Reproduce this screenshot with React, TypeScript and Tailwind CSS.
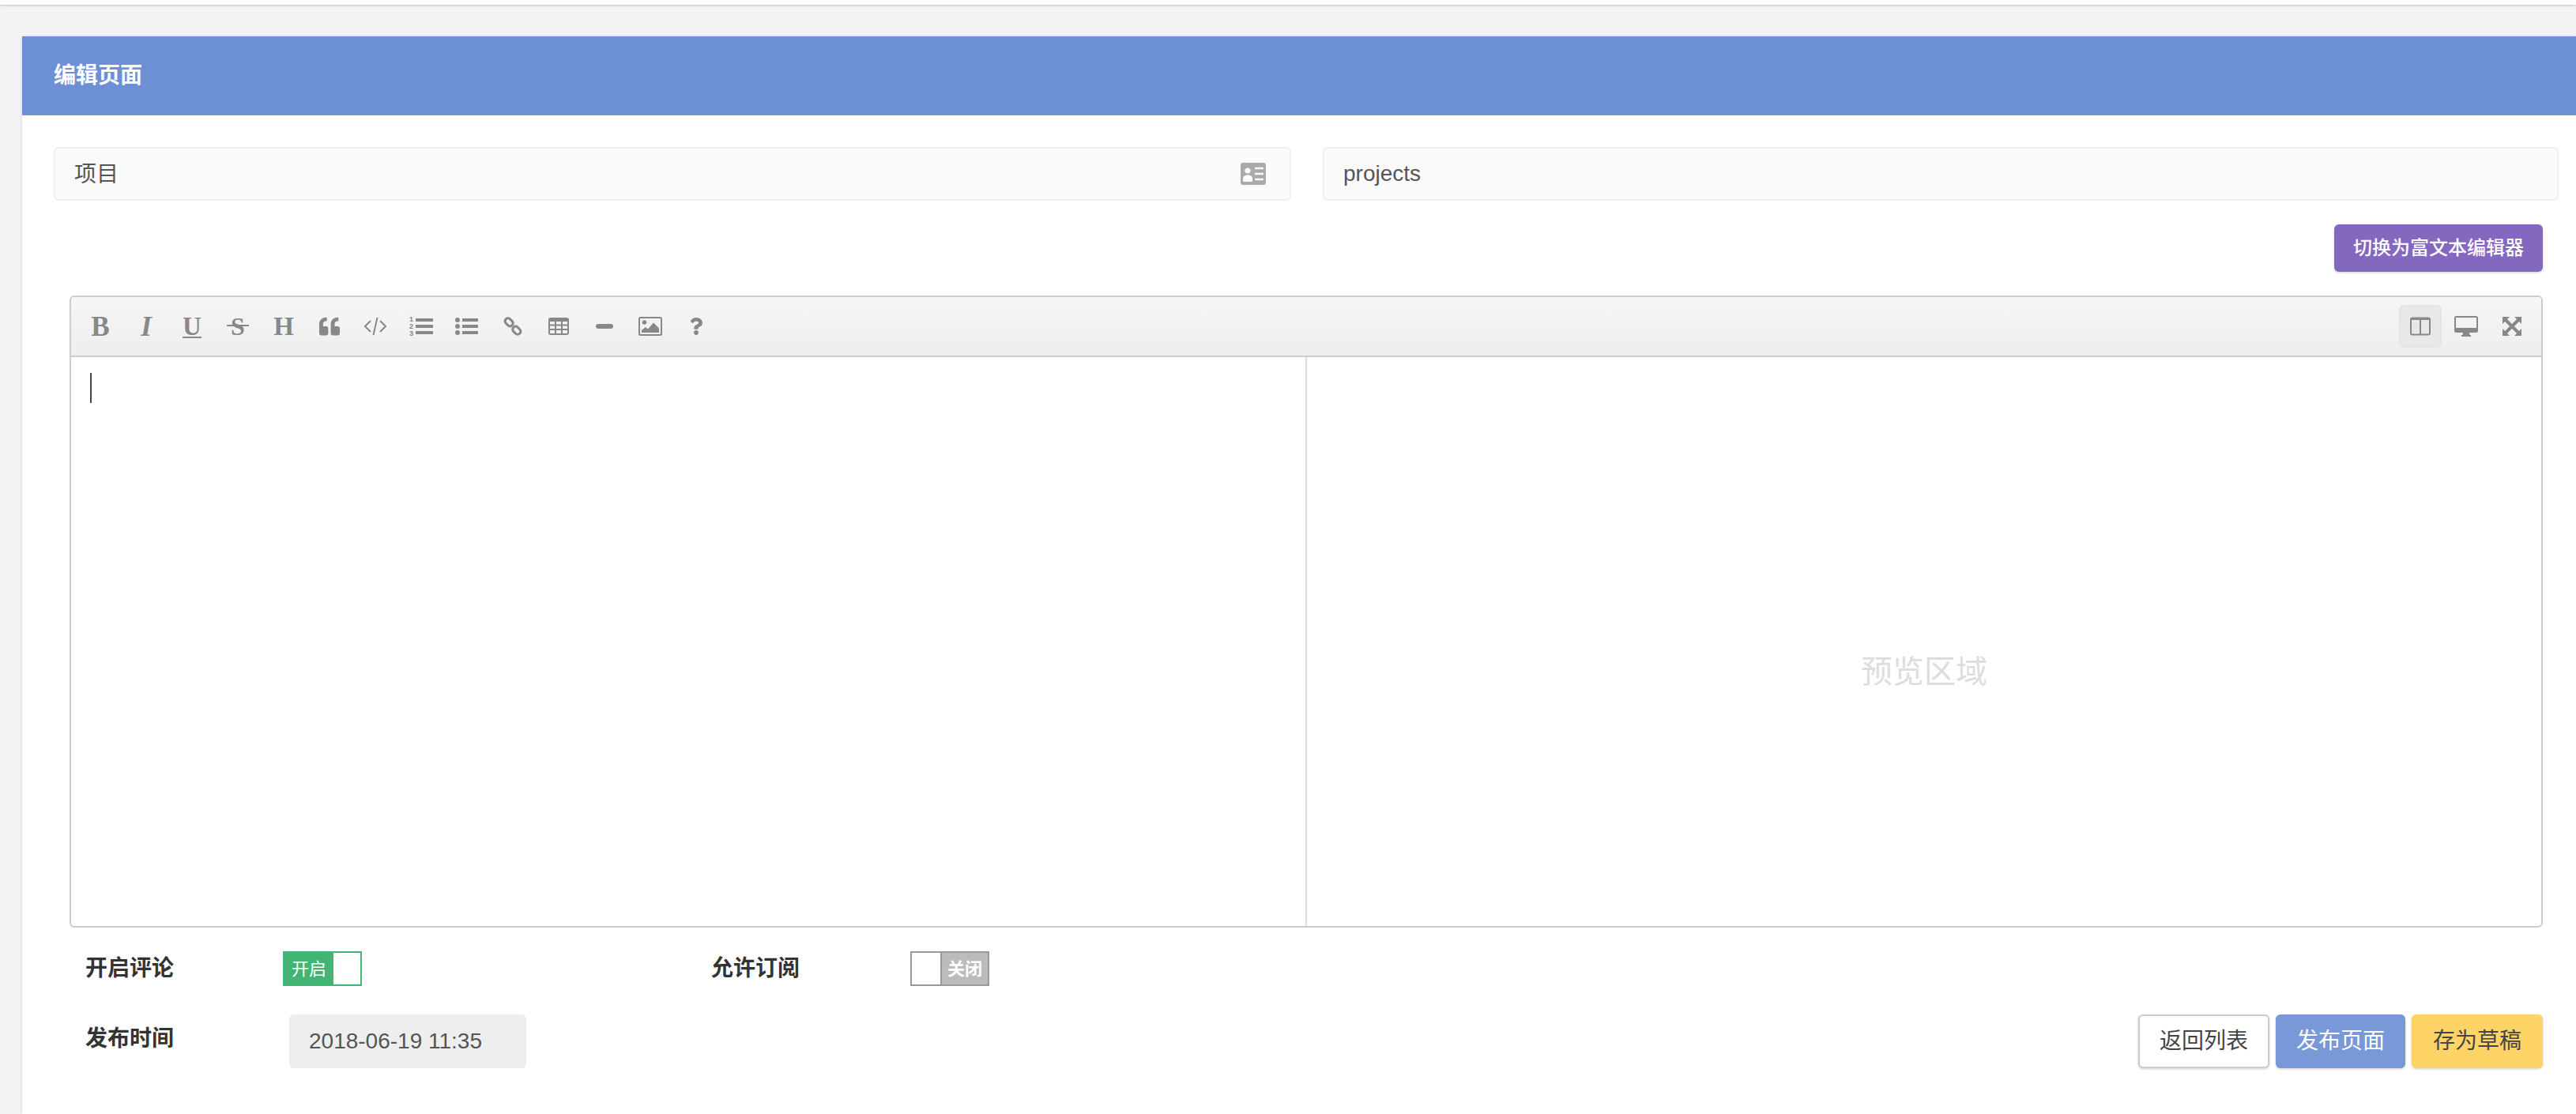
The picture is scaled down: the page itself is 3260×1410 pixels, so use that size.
import React from 'react'
import { FaQuestion, FaQuoteLeft } from 'react-icons/fa'

const font = "font-['Liberation_Sans','Noto_Sans_CJK_SC',sans-serif]"

function Tool({ children, active }: { children: React.ReactNode; active?: boolean }) {
  return (
    <div
      className={`flex size-[54px] mx-[2px] shrink-0 items-center justify-center rounded-md text-[#888] ${
        active ? 'bg-[#e8e8e8] border-2 border-[#e4e4e4]' : ''
      }`}
    >
      {children}
    </div>
  )
}

function Letter({ children, className }: { children: React.ReactNode; className?: string }) {
  return <span className={`font-['Liberation_Serif',serif] leading-none ${className ?? ''}`}>{children}</span>
}

function CodeIcon() {
  return (
    <svg width="30" height="24" viewBox="0 0 30 24" fill="none" stroke="#888" strokeWidth="2">
      <path d="M9 5 2 12l7 7M21 5l7 7-7 7M17.5 1l-5 22" />
    </svg>
  )
}

function OlIcon() {
  return (
    <svg width="30" height="28" viewBox="0 0 30 28" fill="#888">
      <rect x="8" y="4" width="22" height="4" />
      <rect x="8" y="12" width="22" height="4" />
      <rect x="8" y="20" width="22" height="4" />
      <text x="0" y="8" fontSize="9" fontWeight="700" fontFamily="Liberation Sans">1</text>
      <text x="0" y="17" fontSize="9" fontWeight="700" fontFamily="Liberation Sans">2</text>
      <text x="0" y="26" fontSize="9" fontWeight="700" fontFamily="Liberation Sans">3</text>
    </svg>
  )
}

function UlIcon() {
  return (
    <svg width="30" height="24" viewBox="0 0 30 24" fill="#888">
      <circle cx="3" cy="4" r="3" />
      <circle cx="3" cy="12" r="3" />
      <circle cx="3" cy="20" r="3" />
      <rect x="9" y="2" width="20" height="4" />
      <rect x="9" y="10" width="20" height="4" />
      <rect x="9" y="18" width="20" height="4" />
    </svg>
  )
}

function LinkIcon() {
  return (
    <svg width="26" height="26" viewBox="0 0 26 26" fill="none" stroke="#888" strokeWidth="3">
      <rect x="2.5" y="4" width="11" height="7.5" rx="3.5" transform="rotate(45 8 8)" />
      <rect x="12.5" y="14.5" width="11" height="7.5" rx="3.5" transform="rotate(45 18 18)" />
    </svg>
  )
}

function TableIcon() {
  return (
    <svg width="26" height="22" viewBox="0 0 26 22" fill="none" stroke="#888" strokeWidth="2">
      <rect x="1" y="1" width="24" height="20" rx="2" />
      <path d="M1 3h24" strokeWidth="4" />
      <path d="M1 9.5h24M1 15h24M9 4v17M17 4v17" />
    </svg>
  )
}

function ImageIcon() {
  return (
    <svg width="30" height="24" viewBox="0 0 30 24" fill="#888">
      <rect x="1" y="1" width="28" height="22" rx="1.5" fill="none" stroke="#888" strokeWidth="2" />
      <circle cx="7.5" cy="7" r="2.8" />
      <path d="M4 20v-3l5-4 3 2.5 7-8 7 7V20z" />
    </svg>
  )
}

function ColumnsIcon() {
  return (
    <svg width="26" height="24" viewBox="0 0 26 24" fill="none" stroke="#888" strokeWidth="2">
      <rect x="1" y="1.5" width="24" height="21" rx="2" />
      <path d="M1 2.5h24" strokeWidth="3" />
      <path d="M13 2v20" />
    </svg>
  )
}

function DesktopIcon() {
  return (
    <svg width="30" height="26" viewBox="0 0 30 26" fill="#888">
      <path d="M2.5 0h25A2.5 2.5 0 0 1 30 2.5v16a2.5 2.5 0 0 1-2.5 2.5h-25A2.5 2.5 0 0 1 0 18.5v-16A2.5 2.5 0 0 1 2.5 0zM2 2v13h26V2z" fillRule="evenodd" />
      <path d="M11 21h8l.5 3h1.5v2H9v-2h1.5z" />
    </svg>
  )
}

function ExpandIcon() {
  return (
    <svg width="24" height="24" viewBox="0 0 24 24" fill="#888">
      <path d="M0 0h9L0 9zM24 0v9l-9-9zM0 24v-9l9 9zM24 24h-9l9-9z" />
      <path d="M4 4l16 16M20 4 4 20" stroke="#888" strokeWidth="4" />
    </svg>
  )
}

function CardIcon() {
  return (
    <svg width="32" height="28" viewBox="0 0 32 28" className="shrink-0">
      <rect width="32" height="28" rx="3" fill="#aaa" />
      <circle cx="9" cy="10" r="3.6" fill="#fafafa" />
      <path d="M3 24v-4c0-3 2-4.5 6-4.5s6 1.500 6 4.500v4z" fill="#fafafa" />
      <path d="M18 7h11M18 14h11M18 21h11" stroke="#fafafa" strokeWidth="2.5" />
    </svg>
  )
}

function EditorToolbar() {
  return (
    <div className="flex h-[76px] items-center justify-between border-b-2 border-[#ccc] bg-gradient-to-b from-[#f6f6f6] to-[#eeeeee] px-2">
      <div className="flex items-center">
        <Tool><Letter className="text-[35px] font-bold">B</Letter></Tool>
        <Tool><Letter className="text-[35px] font-bold italic">I</Letter></Tool>
        <Tool><Letter className="text-[33px] font-bold underline decoration-2 underline-offset-2">U</Letter></Tool>
        <Tool>
          <div className="relative flex w-[28px] justify-center">
            <Letter className="text-[32px] font-bold">S</Letter>
            <span className="absolute left-0 top-[14px] h-[2px] w-[28px] bg-[#888]" />
          </div>
        </Tool>
        <Tool><Letter className="text-[33px] font-bold">H</Letter></Tool>
        <Tool><FaQuoteLeft size={26} /></Tool>
        <Tool><CodeIcon /></Tool>
        <Tool><OlIcon /></Tool>
        <Tool><UlIcon /></Tool>
        <Tool><LinkIcon /></Tool>
        <Tool><TableIcon /></Tool>
        <Tool><span className="h-[6px] w-[22px] rounded-full bg-[#888]" /></Tool>
        <Tool><ImageIcon /></Tool>
        <Tool><FaQuestion size={22} /></Tool>
      </div>
      <div className="flex items-center">
        <Tool active><ColumnsIcon /></Tool>
        <Tool><DesktopIcon /></Tool>
        <Tool><ExpandIcon /></Tool>
      </div>
    </div>
  )
}

function Toggle({ on }: { on: boolean }) {
  if (on) {
    return (
      <div className="flex h-[44px] w-[100px] border-2 border-[#42b574] bg-[#42b574]">
        <span className="flex w-[62px] items-center justify-center text-[22px] font-normal text-white">开启</span>
        <span className="flex-1 bg-white" />
      </div>
    )
  }
  return (
    <div className="flex h-[44px] w-[100px] border-2 border-[#999] bg-[#bbb]">
      <span className="w-[38px] border-r-2 border-[#999] bg-white" />
      <span className="flex flex-1 items-center justify-center text-[22px] font-bold text-white">关闭</span>
    </div>
  )
}

export default function App() {
  return (
    <div className={`${font} flex h-[1410px] w-[3260px] flex-col overflow-hidden bg-[#f3f3f3] text-[#555]`}>
      <div className="h-[6px] shrink-0 bg-white shadow-[0_1px_3px_rgba(0,0,0,0.2)]" />
      <div className="ml-[28px] mt-[40px] flex flex-1 flex-col bg-white shadow-[0_0_4px_rgba(0,0,0,0.12)]">
        <div className="flex h-[100px] shrink-0 items-center bg-[#6d8fd5] pl-[40px] text-[28px] font-bold text-white">
          编辑页面
        </div>

        <div className="mt-[40px] flex gap-[40px] pl-[40px] pr-[22px]">
          <div className="flex h-[68px] w-[1566px] items-center justify-between rounded-md border-2 border-[#efefef] bg-[#fafafa] pl-[24px] pr-[30px] text-[28px]">
            <span className="pt-[2px]">项目</span>
            <CardIcon />
          </div>
          <div className="flex h-[68px] flex-1 items-center rounded-md border-2 border-[#efefef] bg-[#fafafa] pl-[24px] text-[28px]">
            projects
          </div>
        </div>

        <div className="mt-[30px] flex justify-end pr-[42px]">
          <button className="h-[60px] w-[264px] rounded-md bg-[#8468bf] text-[24px] font-medium text-white shadow-[0_1px_3px_rgba(0,0,0,0.2)]">
            切换为富文本编辑器
          </button>
        </div>

        <div className="ml-[60px] mr-[42px] mt-[30px] flex h-[800px] flex-col overflow-hidden rounded-md border-2 border-[#ccc]">
          <EditorToolbar />
          <div className="flex flex-1">
            <div className="w-[1564px] border-r-2 border-[#ddd] pl-[24px] pt-[20px]">
              <div className="h-[38px] w-[2px] bg-[#444]" />
            </div>
            <div className="flex flex-1 items-center justify-center pt-[76px] text-[40px] text-[#ddd]">预览区域</div>
          </div>
        </div>

        <div className="ml-[80px] mt-[30px] flex items-center text-[28px] font-bold text-[#333]">
          <span className="w-[250px]">开启评论</span>
          <Toggle on />
          <span className="ml-[442px] w-[252px]">允许订阅</span>
          <Toggle on={false} />
        </div>

        <div className="ml-[80px] mr-[42px] mt-[36px] flex items-center justify-between">
          <div className="flex items-center">
            <span className="w-[258px] -translate-y-[3px] text-[28px] font-bold text-[#333]">发布时间</span>
            <div className="flex h-[68px] w-[300px] items-center rounded-md bg-[#eee] pl-[25px] text-[28px]">
              2018-06-19 11:35
            </div>
          </div>
          <div className="flex gap-[8px] text-[28px]">
            <button className="h-[68px] w-[166px] rounded-md border-2 border-[#ccc] bg-white text-[#444] shadow-[0_1px_3px_rgba(0,0,0,0.2)]">
              返回列表
            </button>
            <button className="h-[68px] w-[164px] rounded-md bg-[#7898d8] text-white shadow-[0_1px_3px_rgba(0,0,0,0.2)]">
              发布页面
            </button>
            <button className="h-[68px] w-[166px] rounded-md bg-[#ffd466] text-[#444] shadow-[0_1px_3px_rgba(0,0,0,0.2)]">
              存为草稿
            </button>
          </div>
        </div>
      </div>
    </div>
  )
}
